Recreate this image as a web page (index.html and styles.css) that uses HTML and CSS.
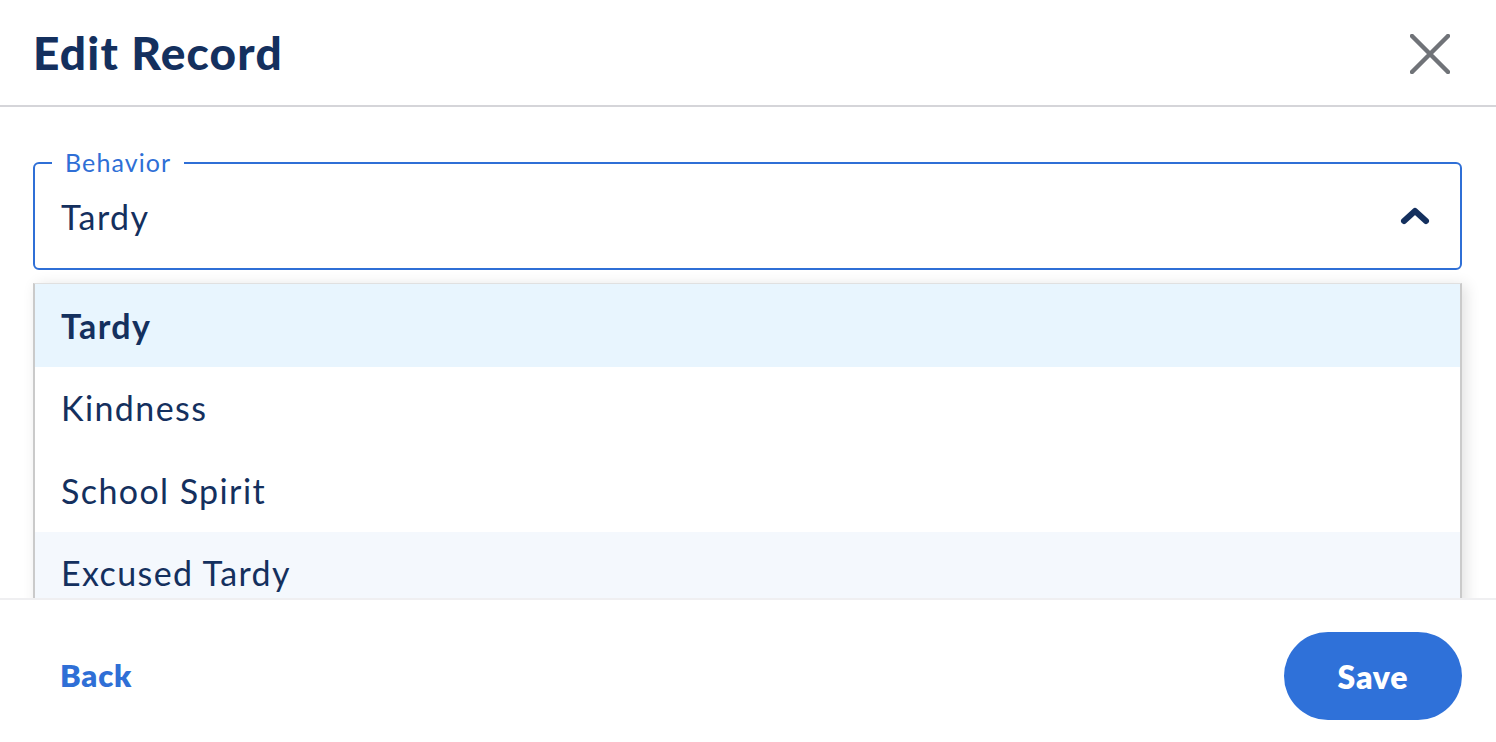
FILE: index.html
```html
<!DOCTYPE html>
<html lang="en">
<head>
    <meta charset="UTF-8" />
    <title>Edit Record</title>
    <link rel="stylesheet" href="styles.css">
</head>
<body>
<div class="modal">
    <div class="modal-head">
        <h1>Edit Record</h1>
        <button class="close" aria-label="Close">
            <svg width="40" height="40" viewBox="0 0 40 40"><path d="M2 2 L38 38 M38 2 L2 38" stroke="#707378" stroke-width="4.5" stroke-linecap="round" fill="none"/></svg>
        </button>
    </div>

    <div class="modal-body">
        <div class="field">
            <label class="field-label">Behavior</label>
            <span>Tardy</span>
            <svg width="30" height="20" viewBox="0 0 30 20"><path d="M4 15 L15 5 L26 15" stroke="#14305e" stroke-width="6" stroke-linecap="round" stroke-linejoin="round" fill="none"/></svg>
        </div>

        <ul class="options">
            <li class="selected">Tardy</li>
            <li>Kindness</li>
            <li>School Spirit</li>
            <li class="hover">Excused Tardy</li>
        </ul>
    </div>

    <div class="modal-foot">
        <a href="#" class="back">Back</a>
        <button class="save">Save</button>
    </div>
</div>
</body>
</html>
```

FILE: styles.css
```css
body {
    margin: 0;
    font-family: Lato, "Noto Sans", sans-serif;
    color: #14305e;
    background: #fff;
}

.modal {
    height: 742px;
    display: flex;
    flex-direction: column;
}

.modal-head {
    height: 105px;
    border-bottom: 2px solid #d5d5d9;
    display: flex;
    align-items: center;
    justify-content: space-between;
    padding: 0 46px 0 33px;
    flex-shrink: 0;
}

.modal-head h1 {
    margin: 0;
    font-size: 46px;
    font-weight: 900;
    color: #14305e;
    letter-spacing: 1.2px;
}

.close {
    border: 0;
    background: none;
    padding: 0;
    width: 40px;
    height: 40px;
    margin-top: 2px;
}

.modal-body {
    flex: 1;
    overflow: hidden;
    padding: 0 34px 0 33px;
}

.field {
    position: relative;
    margin-top: 55px;
    height: 108px;
    box-sizing: border-box;
    border: 2px solid #2f6fd6;
    border-radius: 6px;
    padding: 0 30px 0 26px;
    display: flex;
    align-items: center;
    justify-content: space-between;
    font-size: 34px;
    letter-spacing: 1.4px;
}

.field-label {
    position: absolute;
    top: -16px;
    left: 17px;
    background: #fff;
    padding: 0 13px 0 13px;
    color: #2f6fd6;
    font-size: 25px;
    line-height: 28px;
    letter-spacing: 1.1px;
}

.options {
    list-style: none;
    margin: 13px 0 0;
    padding: 0;
    border-top: 1px solid #e0e0e0;
    border-left: 2px solid #cacaca;
    border-right: 2px solid #cacaca;
    box-shadow: 4px 2px 14px rgba(0, 0, 0, 0.12);
}

.options li {
    height: 82.5px;
    display: flex;
    align-items: center;
    padding-left: 26px;
    font-size: 34px;
    letter-spacing: 1.4px;
}

.options li.selected {
    background: #e8f5fe;
    font-weight: 700;
}

.options li.hover {
    background: #f4f8fd;
}

.modal-foot {
    height: 142px;
    flex-shrink: 0;
    border-top: 2px solid #efeff1;
    display: flex;
    align-items: center;
    justify-content: space-between;
    padding: 0 34px 0 60px;
    background: #fff;
}

.back {
    color: #2f6fd6;
    font-size: 31px;
    font-weight: 800;
    letter-spacing: 0.8px;
    text-decoration: none;
    margin-top: 8px;
}

.save {
    width: 178px;
    height: 88px;
    border: 0;
    border-radius: 44px;
    background: #2f71d9;
    color: #fff;
    font-family: Lato, "Noto Sans", sans-serif;
    font-size: 32px;
    font-weight: 800;
    letter-spacing: 0.8px;
    margin-top: 10px;
}
```
